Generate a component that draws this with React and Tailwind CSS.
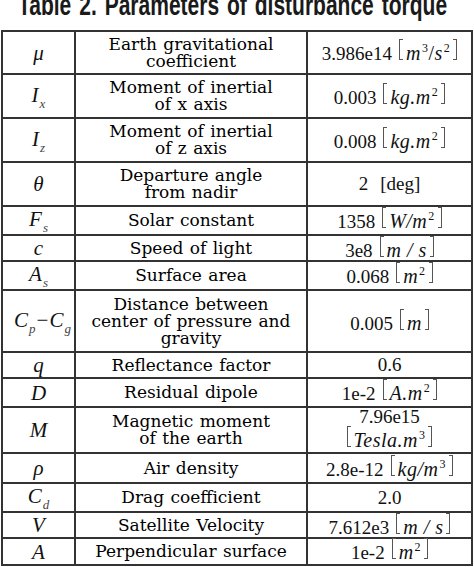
import React from "react";

const LB = () => (
  <span className="inline-block w-[4px] h-[21px] border-l-[1.5px] border-y-[1.5px] border-[#555] align-[-5px] mr-[3px]" />
);
const RB = () => (
  <span className="inline-block w-[4px] h-[21px] border-r-[1.5px] border-y-[1.5px] border-[#555] align-[-5px] ml-[3px]" />
);

const I = ({ children }) => (
  <span className="italic font-['Liberation_Serif',serif]">{children}</span>
);
const Sup = ({ children }) => (
  <span className="relative top-[-8px] text-[12px] ml-[1px]">{children}</span>
);
const Sub = ({ children }) => (
  <span className="relative top-[6px] text-[13px] ml-[1px] text-[#444]">{children}</span>
);

const Unit = ({ children }) => (
  <span className="ml-[7px] inline-flex items-baseline">
    <LB />
    <span className="text-[20px] tracking-[0.5px]">{children}</span>
    <RB />
  </span>
);

const rows = [
  {
    h: "h-[41px]",
    sym: <>μ</>,
    name: ["Earth gravitational", "coefficient"],
    val: (
      <>
        3.986e14
        <Unit>
          <I>m</I>
          <Sup>3</Sup>/<I>s</I>
          <Sup>2</Sup>
        </Unit>
      </>
    ),
  },
  {
    h: "h-[42px]",
    sym: (
      <>
        I<Sub>x</Sub>
      </>
    ),
    name: ["Moment of inertial", "of x axis"],
    val: (
      <>
        0.003
        <Unit>
          <I>kg.m</I>
          <Sup>2</Sup>
        </Unit>
      </>
    ),
  },
  {
    h: "h-[42px]",
    sym: (
      <>
        I<Sub>z</Sub>
      </>
    ),
    name: ["Moment of inertial", "of z axis"],
    val: (
      <>
        0.008
        <Unit>
          <I>kg.m</I>
          <Sup>2</Sup>
        </Unit>
      </>
    ),
  },
  {
    h: "h-[42px]",
    sym: <>θ</>,
    name: ["Departure angle", "from nadir"],
    val: (
      <>
        2<span className="ml-[12px]">[deg]</span>
      </>
    ),
  },
  {
    h: "h-[27px]",
    sym: (
      <>
        F<Sub>s</Sub>
      </>
    ),
    name: ["Solar constant"],
    val: (
      <>
        1358
        <Unit>
          <I>W/m</I>
          <Sup>2</Sup>
        </Unit>
      </>
    ),
  },
  {
    h: "h-[24px]",
    sym: <>c</>,
    name: ["Speed of light"],
    val: (
      <>
        3e8
        <Unit>
          <I>m / s</I>
        </Unit>
      </>
    ),
  },
  {
    h: "h-[27px]",
    sym: (
      <>
        A<Sub>s</Sub>
      </>
    ),
    name: ["Surface area"],
    val: (
      <>
        0.068
        <Unit>
          <I>m</I>
          <Sup>2</Sup>
        </Unit>
      </>
    ),
  },
  {
    h: "h-[60px]",
    sym: (
      <span className="ml-[8px]">
        C<Sub>p</Sub>
        <span className="not-italic mx-[1px]">−</span>C<Sub>g</Sub>
      </span>
    ),
    name: ["Distance between", "center of pressure and", "gravity"],
    val: (
      <>
        0.005
        <Unit>
          <I>m</I>
        </Unit>
      </>
    ),
  },
  {
    h: "h-[24px]",
    sym: <>q</>,
    name: ["Reflectance factor"],
    val: <>0.6</>,
  },
  {
    h: "h-[27px]",
    sym: <>D</>,
    name: ["Residual dipole"],
    val: (
      <>
        1e-2
        <Unit>
          <I>A.m</I>
          <Sup>2</Sup>
        </Unit>
      </>
    ),
  },
  {
    h: "h-[44px]",
    sym: <>M</>,
    name: ["Magnetic moment", "of the earth"],
    val: (
      <span className="flex flex-col items-center leading-[18px]">
        <span>7.96e15</span>
        <span className="inline-flex items-baseline">
          <LB />
          <span className="text-[20px] tracking-[0.5px]">
            <I>Tesla.m</I>
            <Sup>3</Sup>
          </span>
          <RB />
        </span>
      </span>
    ),
  },
  {
    h: "h-[28px]",
    sym: <>ρ</>,
    name: ["Air density"],
    val: (
      <>
        2.8e-12
        <Unit>
          <I>kg/m</I>
          <Sup>3</Sup>
        </Unit>
      </>
    ),
  },
  {
    h: "h-[27px]",
    sym: (
      <>
        C<Sub>d</Sub>
      </>
    ),
    name: ["Drag coefficient"],
    val: <>2.0</>,
  },
  {
    h: "h-[24px]",
    sym: <>V</>,
    name: ["Satellite Velocity"],
    val: (
      <>
        7.612e3
        <Unit>
          <I>m / s</I>
        </Unit>
      </>
    ),
  },
  {
    h: "h-[25px]",
    sym: <>A</>,
    name: ["Perpendicular surface"],
    val: (
      <>
        1e-2
        <Unit>
          <I>m</I>
          <Sup>2</Sup>
        </Unit>
      </>
    ),
  },
];

export default function App() {
  return (
    <div className="w-[474px] h-[567px] bg-white overflow-hidden text-[#111]">
      <div className="h-[30px] overflow-hidden pl-[18px]">
        <div className="block w-max mt-[-10px] origin-top-left [transform:scaleX(0.7)] whitespace-nowrap font-['Liberation_Sans',Arial,sans-serif] font-bold text-[30px] leading-[30px] text-[#1a1a1a] [word-spacing:3px]">
          Table 2. Parameters of disturbance torque
        </div>
      </div>
      <div className="ml-[1px] w-[472px] grid grid-cols-[71px_230px_163px] gap-[2px] p-[2px] bg-[#333]">
        {rows.map((r, i) => (
          <React.Fragment key={i}>
            <div
              className={`${r.h} bg-white flex items-center justify-center font-['Liberation_Serif',serif] italic text-[21px] leading-[20px] whitespace-nowrap`}
            >
              <span>{r.sym}</span>
            </div>
            <div
              className={`${r.h} bg-white flex flex-col items-center justify-center font-['DejaVu_Serif',serif] text-[17px] leading-[17px] [word-spacing:1px] text-black whitespace-nowrap`}
            >
              {r.name.map((n, j) => (
                <span key={j}>{n}</span>
              ))}
            </div>
            <div
              className={`${r.h} bg-white flex items-center justify-center font-['Liberation_Serif',serif] text-[19px] leading-[20px] whitespace-nowrap`}
            >
              <span className="inline-flex items-baseline">{r.val}</span>
            </div>
          </React.Fragment>
        ))}
      </div>
    </div>
  );
}
